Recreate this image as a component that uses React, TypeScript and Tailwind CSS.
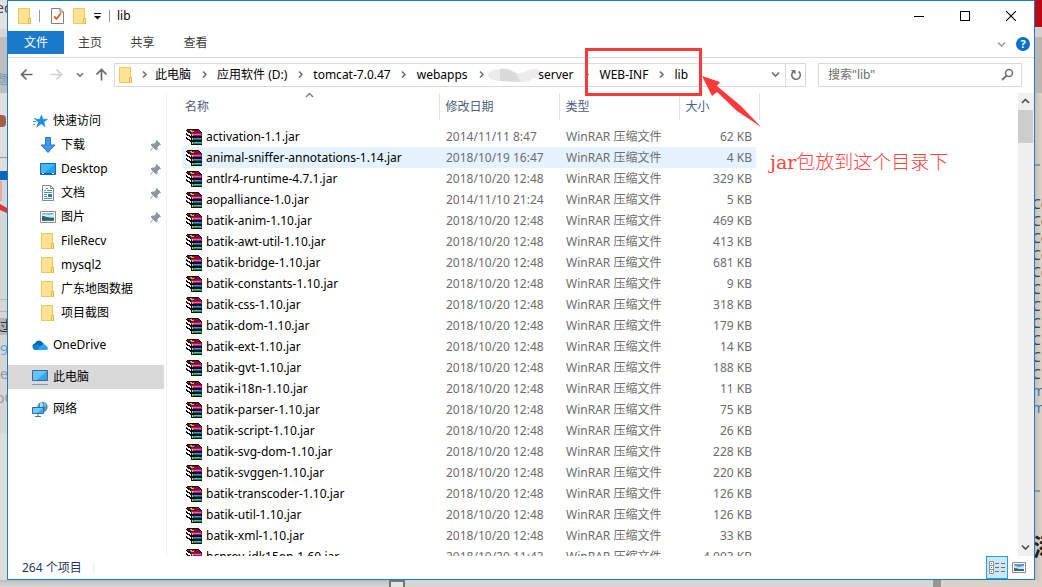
import React from "react";

type FileRow = { name: string; date: string; size: string };

const files: FileRow[] = [
  { name: "activation-1.1.jar", date: "2014/11/11 8:47", size: "62 KB" },
  { name: "animal-sniffer-annotations-1.14.jar", date: "2018/10/19 16:47", size: "4 KB" },
  { name: "antlr4-runtime-4.7.1.jar", date: "2018/10/20 12:48", size: "329 KB" },
  { name: "aopalliance-1.0.jar", date: "2014/11/10 21:24", size: "5 KB" },
  { name: "batik-anim-1.10.jar", date: "2018/10/20 12:48", size: "469 KB" },
  { name: "batik-awt-util-1.10.jar", date: "2018/10/20 12:48", size: "413 KB" },
  { name: "batik-bridge-1.10.jar", date: "2018/10/20 12:48", size: "681 KB" },
  { name: "batik-constants-1.10.jar", date: "2018/10/20 12:48", size: "9 KB" },
  { name: "batik-css-1.10.jar", date: "2018/10/20 12:48", size: "318 KB" },
  { name: "batik-dom-1.10.jar", date: "2018/10/20 12:48", size: "179 KB" },
  { name: "batik-ext-1.10.jar", date: "2018/10/20 12:48", size: "14 KB" },
  { name: "batik-gvt-1.10.jar", date: "2018/10/20 12:48", size: "188 KB" },
  { name: "batik-i18n-1.10.jar", date: "2018/10/20 12:48", size: "11 KB" },
  { name: "batik-parser-1.10.jar", date: "2018/10/20 12:48", size: "75 KB" },
  { name: "batik-script-1.10.jar", date: "2018/10/20 12:48", size: "26 KB" },
  { name: "batik-svg-dom-1.10.jar", date: "2018/10/20 12:48", size: "228 KB" },
  { name: "batik-svggen-1.10.jar", date: "2018/10/20 12:48", size: "220 KB" },
  { name: "batik-transcoder-1.10.jar", date: "2018/10/20 12:48", size: "126 KB" },
  { name: "batik-util-1.10.jar", date: "2018/10/20 12:48", size: "126 KB" },
  { name: "batik-xml-1.10.jar", date: "2018/10/20 12:48", size: "33 KB" },
  { name: "bcprov-jdk15on-1.60.jar", date: "2018/10/20 11:43", size: "4,003 KB" },
];

function FolderIcon() {
  return (
    <svg width="14" height="16" viewBox="0 0 14 16" className="shrink-0">
      <path d="M.5.5h11v9.5h1v5.5H.5z" fill="#ffe394" stroke="#ecc956" />
      <path d="M10.500 15V10.500h2v5h-2" fill="#ffe9a6" stroke="#e3b93c" />
    </svg>
  );
}

function CheckDocIcon() {
  return (
    <svg width="13" height="16" viewBox="0 0 13 16" className="shrink-0">
      <path d="M.5.5H9L12.500 4v11.500H.5z" fill="#fff" stroke="#808080" />
      <path d="M9 .5V4h3.500" fill="none" stroke="#808080" />
      <path d="M3 8.500 5.500 11 10 5" fill="none" stroke="#ea5a1c" strokeWidth="1.800" />
    </svg>
  );
}

function Chevron({ dir, className }: { dir: "right" | "down" | "up"; className?: string }) {
  const d = dir === "right" ? "M3 1.500 6 4.500 3 7.500" : dir === "down" ? "M1 2.500 4.500 6 8 2.500" : "M1 6 4.500 2.500 8 6";
  return (
    <svg width="9" height="9" viewBox="0 0 9 9" className={className}>
      <path d={d} fill="none" stroke="currentColor" strokeWidth="1.600" />
    </svg>
  );
}

function Arrow({ dir, className }: { dir: "left" | "right" | "up"; className?: string }) {
  const d =
    dir === "left"
      ? "M12.500 6.500H1.500M6.500 1.500l-5 5 5 5"
      : dir === "right"
        ? "M.5 6.500h11M6.500 1.500l5 5-5 5"
        : "M6.500 12.500V1.500M1.500 6.500l5-5 5 5";
  return (
    <svg width="13" height="13" viewBox="0 0 13 13" className={className}>
      <path d={d} fill="none" stroke="currentColor" strokeWidth="1.700" />
    </svg>
  );
}

function ArchiveIcon() {
  return (
    <svg width="16" height="16" viewBox="0 0 16 16" shapeRendering="crispEdges" className="shrink-0">
      <path d="M1 0h12v1h1v1h1v1h1v13H5v-1H4v-1H3v-1H2v-1H1v-1H0V1h1z" fill="#120a14" />
      <path d="M1 1h12v1h1v1h1v1H5V3H3V2H1z" fill="#7c1030" />
      <path d="M4 1h2v1H4zM5 2h3v1H5z" fill="#d8c020" />
      <path d="M5 4h11v3H6V6H5z" fill="#a81468" />
      <path d="M7 5h8v1H7z" fill="#e868b8" />
      <path d="M6 9h10v2H6z" fill="#0c5ca8" />
      <path d="M8 9h7v1H8z" fill="#3c98dc" />
      <path d="M6 13h10v2H6z" fill="#0a9058" />
      <path d="M8 13h7v1H8z" fill="#48cc90" />
      <path d="M6 5h1v2H6zM6 9h1v2H6zM6 13h1v2H6z" fill="#d8d040" />
      <path
        d="M0 2h1v1h1v1h2v1h1v2H4V6H2V5H1V4H0zM0 6h1v1h2v1h1v1h1v2H4v-1H2V9H1V8H0zM0 10h1v1h2v1h1v1h1v2H4v-1H2v-1H1v-1H0z"
        fill="#fff"
      />
    </svg>
  );
}

function StarIcon() {
  return (
    <svg width="16" height="16" viewBox="0 0 16 16" className="shrink-0">
      <path d="M9.500 2 11 6.200l4.500.1-3.700 2.600 1.300 4.600-4-2.700-4.500 3.400 2-5L3 6.300l4.800-.1z" fill="#1b92e6" stroke="#1b7fcb" strokeWidth=".6" />
      <path d="M1 8.500h3M1 11.500h2M2 5.500h2" stroke="#5c9cc8" />
    </svg>
  );
}

function DownloadIcon() {
  return (
    <svg width="16" height="16" viewBox="0 0 16 16" className="shrink-0">
      <path d="M5.500.5h5v7.500h4.500L8 15.500 1 8h4.500z" fill="#3f97e6" stroke="#2a78c4" />
    </svg>
  );
}

function DesktopIcon() {
  return (
    <svg width="16" height="16" viewBox="0 0 16 16" className="shrink-0">
      <path d="M.5 2.500h15v11H.5z" fill="#20a2fa" stroke="#0a6abb" />
      <path d="M1 3h14L4 12H1z" fill="#45b6ff" />
      <path d="M1 12.500h14" stroke="#075fa8" />
      <path d="M2 12.500h2M12 12.500h2" stroke="#fff" />
    </svg>
  );
}

function DocIcon() {
  return (
    <svg width="16" height="16" viewBox="0 0 16 16" className="shrink-0">
      <path d="M2.500.5h8l3 3v12h-11z" fill="#fff" stroke="#858585" />
      <path d="M10.500.5v3h3" fill="none" stroke="#858585" />
      <path d="M6 3.500h2M4 5.500h2M7 5.500h5M4 7.500h8M4 9.500h3M4 11.500h3M4 13.500h8" stroke="#3e94c5" />
      <path d="M8 9h4v3H8z" fill="#3578a4" />
    </svg>
  );
}

function PictureIcon() {
  return (
    <svg width="16" height="16" viewBox="0 0 16 16" className="shrink-0">
      <path d="M.5 2.500h15v11H.5z" fill="#fff" stroke="#8c8c8c" />
      <path d="M2 4h12v8H2z" fill="#7ab9ef" />
      <path d="M2 6l3-1 4 1 5-1v3H2z" fill="#d5e9f5" />
      <path d="M2 7c4 0 5 2 12 2v3H2z" fill="#2f6857" />
      <path d="M2 11h12v1H2z" fill="#2b7fb5" />
    </svg>
  );
}

function CloudIcon() {
  return (
    <svg width="16" height="12" viewBox="0 0 16 12" className="shrink-0">
      <path d="M3 10.500C-.5 9.500-.3 5 3 4.500 4 1 8.500.2 10.500 3.500L12 5l-6 5.500z" fill="#0864b8" />
      <path d="M3 11C.5 10.500 0 7 2.500 6 5 4.500 7 5.500 9 7l4 4z" fill="#1080d8" />
      <path d="M5 11l4.500-5c1.500-1.500 4-1 4.500 1 2.500.5 2.500 4 0 4z" fill="#28a2ec" />
    </svg>
  );
}

function ComputerIcon() {
  return (
    <svg width="16" height="16" viewBox="0 0 16 16" className="shrink-0">
      <path d="M.5 1.500h15v10H.5z" fill="#2fa5ee" stroke="#386b8d" />
      <path d="M1 2h14L5 11H1z" fill="#66c2fa" />
      <path d="M0 15.500h16" stroke="#7d9db5" />
    </svg>
  );
}

function NetworkIcon() {
  return (
    <svg width="16" height="16" viewBox="0 0 16 16" className="shrink-0">
      <circle cx="10.500" cy="6" r="5.200" fill="#4e93bd" />
      <path d="M8 2c2-1 3 0 3 2s-2 3-3 2zM12 2c2 1 2 3 1 4z" fill="#b5d9e8" />
      <path d="M.5 6.500h11v6H.5z" fill="#3aaef0" stroke="#2c6d9a" />
      <path d="M1 7h10l-6 5H1z" fill="#70ccfa" />
      <path d="M6 13v2M3 15.500h6" stroke="#50758d" />
    </svg>
  );
}

function PinIcon() {
  return (
    <svg width="11" height="11" viewBox="0 0 11 11" className="shrink-0">
      <path d="M6.500.5l4 4-1.500.5-2 2 .2 2.200-1 .8-5-5 .8-1L4.200 4.200l2-2zM3 7.500.5 10.500" fill="#8796a3" stroke="#8796a3" />
    </svg>
  );
}

const quickItems = [
  { label: "下载", icon: <DownloadIcon />, pinned: true },
  { label: "Desktop", icon: <DesktopIcon />, pinned: true },
  { label: "文档", icon: <DocIcon />, pinned: true },
  { label: "图片", icon: <PictureIcon />, pinned: true },
  { label: "FileRecv", icon: <FolderIcon />, pinned: false },
  { label: "mysql2", icon: <FolderIcon />, pinned: false },
  { label: "广东地图数据", icon: <FolderIcon />, pinned: false },
  { label: "项目截图", icon: <FolderIcon />, pinned: false },
];

const rootItems = [
  { label: "OneDrive", icon: <CloudIcon />, active: false },
  { label: "此电脑", icon: <ComputerIcon />, active: true },
  { label: "网络", icon: <NetworkIcon />, active: false },
];

function Backdrop() {
  return (
    <div aria-hidden="true" className="absolute inset-0 overflow-hidden bg-[#d6d6d6]">
      <div className="absolute left-0 top-0 h-[29px] w-[7px] bg-[#e2e2e2]" />
      <div className="absolute -left-1 top-0 text-sm leading-4 text-[#444]">ec</div>
      <div className="absolute left-0 top-[37px] h-14 w-[7px] bg-[#bebebe]" />
      <div className="absolute -left-1 top-[74px] text-xs leading-3 text-[#7290a9]">题</div>
      <div className="absolute left-0 top-[93px] h-[78px] w-[7px] bg-[#dedede]" />
      <div className="absolute left-0 top-[115px] h-3 w-[6px] rounded-r bg-[#a55e45]" />
      <div className="absolute left-0 top-[157px] h-px w-[7px] bg-[#999]" />
      <div className="absolute left-0 top-[171px] h-[9px] w-[7px] bg-[#0867bd]" />
      <div className="absolute left-0 top-[181px] h-[20px] w-[2px] bg-[#e7a5a5]" />
      <svg className="absolute left-0 top-[203px]" width="7" height="10">
        <path d="M0 1l7 4v5L0 7z" fill="#dc3535" />
      </svg>
      <div className="absolute left-0 top-[299px] h-[13px] w-[7px] border-y border-[#a9b5bd]" />
      <div className="absolute left-0 top-[318px] h-[17px] w-[7px] bg-[#b5b5b5]" />
      <div className="absolute -left-1 top-[318px] text-sm leading-4 text-[#333]">过</div>
      <div className="absolute -left-2 top-[342px] text-sm leading-4 text-[#6aa4c8]">19</div>
      <div className="absolute left-0 top-[366px] text-sm leading-4 text-[#999]">e</div>
      <div className="absolute -left-1 top-[390px] text-sm leading-4 text-[#999]">oC</div>
      <div className="absolute left-0 top-[434px] bottom-0 w-[7px] bg-[#dddddd]" />

      <div className="absolute right-0 top-0 h-full w-[7px] bg-gradient-to-r from-[#c8bfb6] to-[#ddd3ca]" />
      <div className="absolute right-0 top-0 h-[27px] w-[7px] bg-[#bb0a14]" />
      <div className="absolute right-0 top-[27px] h-[10px] w-[7px] bg-[#d4d0ce]" />
      <div className="absolute right-0 top-[37px] h-14 w-[7px] bg-[#bcb5b0]" />
      <div className="absolute right-[2px] top-[164px] h-[2px] w-[5px] bg-[#96918d]" />
      <div className="absolute right-[2px] top-[490px] h-[2px] w-[5px] bg-[#96918d]" />
      <div className="absolute left-[1032px] top-[195px] flex flex-col text-sm leading-[17px] text-[#39404a]">
        <span>Co</span>
        <span>Co</span>
        <span>Co</span>
        <span>Co</span>
        <span>Co</span>
        <span>C</span>
        <span>C</span>
        <span>C</span>
        <span>C</span>
        <span>C</span>
        <span>C</span>
        <span className="text-[#3c78a8]">m</span>
        <span className="text-[#3c78a8]">m</span>
      </div>
      <div className="absolute left-[1033px] top-[533px] text-2xl font-bold leading-7 text-[#222]">添</div>

      <div className="absolute bottom-0 left-0 h-[7px] w-[389px] bg-gradient-to-b from-[#bdbdbd] to-[#d8d8d8]" />
      <div className="absolute bottom-0 left-[389px] h-[7px] w-4 border-2 border-b-0 border-[#777] bg-[#e4e4e4]" />
      <div className="absolute bottom-0 left-[933px] h-[7px] w-2 bg-[#969696]" />
      <div className="absolute bottom-0 left-[941px] right-0 h-[7px] bg-[#dbd1c9]" />
    </div>
  );
}

function TitleBar() {
  return (
    <header className="flex h-[30px] shrink-0 items-center bg-white pl-[10px]">
      <FolderIcon />
      <span className="ml-[7px] h-3 w-px bg-[#999]" />
      <span className="ml-[11px] flex">
        <CheckDocIcon />
      </span>
      <span className="ml-[9px] flex">
        <FolderIcon />
      </span>
      <button type="button" aria-label="自定义快速访问工具栏" className="ml-[6px] p-px">
        <svg width="7" height="7" viewBox="0 0 7 7">
          <path d="M0 0h7v1H0zM0 3h7L3.500 6.500z" fill="#111" />
        </svg>
      </button>
      <span className="ml-[7px] h-3 w-px bg-[#999]" />
      <h1 className="ml-[7px] text-xs text-black">lib</h1>
      <div className="ml-auto flex h-full items-center">
        <button type="button" aria-label="最小化" className="flex h-full w-[46px] items-center justify-center">
          <span className="h-px w-[10px] bg-black" />
        </button>
        <button type="button" aria-label="最大化" className="flex h-full w-[46px] items-center justify-center">
          <span className="size-[10px] border border-black" />
        </button>
        <button type="button" aria-label="关闭" className="flex h-full w-[46px] items-center justify-center">
          <svg width="10" height="10" viewBox="0 0 10 10">
            <path d="M0 0l10 10M10 0 0 10" stroke="#000" strokeWidth="1.100" />
          </svg>
        </button>
      </div>
    </header>
  );
}

function Ribbon() {
  return (
    <nav className="flex h-[27px] shrink-0 items-start border-b border-[#dadbdc] bg-white text-xs text-[#3c3c3c]">
      <button type="button" className="h-[23px] w-14 bg-[#1979ca] text-white">文件</button>
      <button type="button" className="h-[23px] w-[52px]">主页</button>
      <button type="button" className="h-[23px] w-[53px]">共享</button>
      <button type="button" className="h-[23px] w-[53px]">查看</button>
      <div className="ml-auto flex h-[26px] items-center gap-[10px] pr-[4px]">
        <button type="button" aria-label="展开功能区" className="text-[#a0a0a0]">
          <Chevron dir="down" />
        </button>
        <button type="button" aria-label="帮助" className="flex size-[14px] items-center justify-center rounded-full bg-[#0a71c9] text-[11px] font-bold leading-3 text-white">
          ?
        </button>
      </div>
    </nav>
  );
}

function Separator() {
  return (
    <span className="flex w-[26px] shrink-0 justify-center text-[#707070]">
      <Chevron dir="right" />
    </span>
  );
}

function AddressRow() {
  return (
    <div className="flex h-[35px] shrink-0 items-center bg-white px-3 pb-[2px] text-xs">
      <button type="button" aria-label="后退" className="text-[#686868]">
        <Arrow dir="left" />
      </button>
      <button type="button" aria-label="前进" className="ml-[17px] text-[#d0d0d0]">
        <Arrow dir="right" />
      </button>
      <button type="button" aria-label="最近浏览的位置" className="ml-[13px] text-[#707070]">
        <Chevron dir="down" className="size-[8px]" />
      </button>
      <button type="button" aria-label="上移" className="ml-[11px] text-[#686868]">
        <Arrow dir="up" />
      </button>
      <div className="ml-[6px] flex h-[24px] min-w-0 flex-1 items-center border border-[#d9d9d9] pl-1 text-black">
        <FolderIcon />
        <span className="flex w-[22px] shrink-0 justify-center text-[#707070]">
          <Chevron dir="right" />
        </span>
        <a href="#pc" className="shrink-0">此电脑</a>
        <Separator />
        <a href="#d" className="shrink-0">应用软件 (D:)</a>
        <Separator />
        <a href="#tomcat" className="shrink-0">tomcat-7.0.47</a>
        <Separator />
        <a href="#webapps" className="shrink-0">webapps</a>
        <span className="flex w-[20px] shrink-0 justify-center pl-2 text-[#707070]">
          <Chevron dir="right" />
        </span>
        <a href="#server" className="flex w-[86px] shrink-0 items-center justify-end">
          <svg width="54" height="16" viewBox="0 0 54 16" className="-mr-1 shrink-0">
            <path d="M0 8c0-4 7-6 14-6 8-1 10 3 15 4 7 1 10-4 17-4 6 0 8 2 8 5 0 4-8 3-11 6-5 3-16 2-23 1C9 15 0 13 0 8z" fill="#ececec" />
            <path d="M12 2c7-2 10 2 16 4l4 9-20-1z" fill="#dadada" />
          </svg>
          server
        </a>
        <Separator />
        <a href="#webinf" className="shrink-0">WEB-INF</a>
        <Separator />
        <a href="#lib" className="shrink-0">lib</a>
        <button type="button" aria-label="以前的位置" className="ml-auto flex h-full w-5 items-center justify-center text-[#707070]">
          <Chevron dir="down" />
        </button>
        <button type="button" aria-label="刷新" className="flex h-full w-[20px] items-center justify-center border-l border-[#d9d9d9]">
          <svg width="12" height="12" viewBox="0 0 12 12">
            <path d="M8.500 2.500A4.300 4.300 0 1 1 3.200 2.800" fill="none" stroke="#707070" strokeWidth="1.600" />
            <path d="M.8 1h4.700v4.600z" fill="#707070" />
          </svg>
        </button>
      </div>
      <label className="ml-3 flex h-[24px] w-[204px] shrink-0 items-center border border-[#d9d9d9] pl-[9px] pr-[7px]">
        <span className="sr-only">搜索</span>
        <input type="search" placeholder={'搜索"lib"'} className="min-w-0 flex-1 bg-transparent text-xs outline-none placeholder:text-[#6d6d6d]" />
        <svg width="13" height="13" viewBox="0 0 13 13">
          <circle cx="8" cy="5" r="3.500" fill="none" stroke="#707070" strokeWidth="1.500" />
          <path d="M5.500 7.500 1 12" stroke="#707070" strokeWidth="1.800" />
        </svg>
      </label>
    </div>
  );
}

function Sidebar() {
  return (
    <aside className="w-[159px] shrink-0 overflow-hidden border-r border-[#f0f0f0] pt-4 text-xs text-black">
      <a href="#quick" className="flex h-6 items-center gap-[5px] pl-6">
        <StarIcon />
        快速访问
      </a>
      <ul>
        {quickItems.map((item) => (
          <li key={item.label}>
            <a href="#folder" className="flex h-6 items-center gap-[5px] pl-8 pr-[5px]">
              <span className="flex w-4 shrink-0 justify-center">{item.icon}</span>
              <span className="flex-1">{item.label}</span>
              {item.pinned && <PinIcon />}
            </a>
          </li>
        ))}
      </ul>
      <ul className="flex flex-col gap-2 pt-2">
        {rootItems.map((item) => (
          <li key={item.label}>
            <a
              href="#root"
              className={
                item.active
                  ? "mr-[2px] flex h-6 items-center gap-[5px] bg-[#d9d9d9] pl-6"
                  : "mr-[2px] flex h-6 items-center gap-[5px] pl-6"
              }
            >
              {item.icon}
              {item.label}
            </a>
          </li>
        ))}
      </ul>
    </aside>
  );
}

function FileTable() {
  return (
    <section className="min-w-0 flex-1 overflow-hidden pl-[15px]">
      <table className="w-[577px] table-fixed border-collapse text-left text-xs">
        <colgroup>
          <col className="w-[257px]" />
          <col className="w-[120px]" />
          <col className="w-[120px]" />
          <col className="w-[77px]" />
          <col className="w-[3px]" />
        </colgroup>
        <thead className="text-[#4c607a]">
          <tr className="h-[27px]">
            <th className="relative p-0 pl-[3px] font-normal">
              名称
              <Chevron dir="up" className="absolute left-[123px] top-[-2px] text-[#808080]" />
            </th>
            <th className="border-l border-[#e5e5e5] p-0 pl-[6px] font-normal">修改日期</th>
            <th className="border-l border-[#e5e5e5] p-0 pl-[6px] font-normal">类型</th>
            <th colSpan={2} className="border-x border-[#e5e5e5] p-0 pl-[6px] font-normal">大小</th>
          </tr>
        </thead>
        <tbody className="text-[#6d6d6d]">
          <tr className="h-[6px]">
            <td colSpan={5} className="p-0" />
          </tr>
          {files.map((file, index) => {
            const tint = index === 1 ? "bg-[#e5f3ff]" : "";
            return (
              <tr key={file.name} className="h-[21px]">
                <td className={`p-0 pl-1 text-black ${tint}`}>
                  <span className="flex items-center gap-1 whitespace-nowrap">
                    <ArchiveIcon />
                    {file.name}
                  </span>
                </td>
                <td className={`whitespace-nowrap p-0 pl-[7px] ${tint}`}>{file.date}</td>
                <td className={`whitespace-nowrap p-0 pl-[7px] ${tint}`}>WinRAR 压缩文件</td>
                <td className={`whitespace-nowrap p-0 pr-1 text-right ${tint}`}>{file.size}</td>
                <td className="p-0" />
              </tr>
            );
          })}
        </tbody>
      </table>
    </section>
  );
}

function ScrollBar() {
  return (
    <div className="flex w-4 shrink-0 flex-col bg-[#f0f0f0] text-[#505050]">
      <button type="button" aria-label="向上滚动" className="flex h-[17px] items-center justify-center pr-px">
        <Chevron dir="up" />
      </button>
      <div className="mr-px h-[33px] bg-[#cdcdcd]" />
      <button type="button" aria-label="向下滚动" className="mt-auto flex h-[17px] items-center justify-center pr-px">
        <Chevron dir="down" />
      </button>
    </div>
  );
}

function StatusBar() {
  return (
    <footer className="flex h-[23px] shrink-0 items-center bg-white pl-[14px] pr-[8px] text-xs text-[#1e395b]">
      <span>264 个项目</span>
      <span className="ml-[11px] h-3 w-px bg-[#eeeeee]" />
      <button type="button" aria-label="详细信息" className="ml-auto flex h-[23px] w-[22px] items-center justify-center border border-[#26a0da] bg-[#cbe8f6]">
        <svg width="16" height="13" viewBox="0 0 16 13">
          <path d="M.5.5h4v12h-4zM.5 4.500h4M.5 8.500h4" fill="#fff" stroke="#909090" />
          <path d="M6 2.500h4M12 2.500h4M6 6.500h4M12 6.500h4M6 10.500h4M12 10.500h4" stroke="#707070" />
          <path d="M2 2h1v1H2z" fill="#666" />
          <path d="M2 6h1v1H2z" fill="#2f77d0" />
          <path d="M2 10h1v1H2z" fill="#d03030" />
        </svg>
      </button>
      <button type="button" aria-label="大图标" className="ml-[4px]">
        <svg width="14" height="11" viewBox="0 0 14 11">
          <path d="M.5.5h13v10H.5z" fill="#fff" stroke="#909090" />
          <path d="M2 2h10v7H2z" fill="#5793d5" />
          <path d="M2 3l4 2 6-1v3H2z" fill="#cbe3f3" />
          <path d="M2 6c4 0 6 2 10 1v2H2z" fill="#326c63" />
        </svg>
      </button>
    </footer>
  );
}

function Annotations() {
  return (
    <>
      <div className="pointer-events-none absolute left-[585px] top-[48px] h-12 w-[117px] border-[3px] border-[#fd3939]" />
      <svg className="pointer-events-none absolute left-[702px] top-[75px]" width="60" height="54" viewBox="0 0 60 54">
        <path d="M0 1 18 7l-3 4 24 20 20 21-24-16-20-19-5 4z" fill="#fd3939" />
      </svg>
      <p className="pointer-events-none absolute left-[770px] top-[150px] whitespace-nowrap font-['DejaVu_Serif','Noto_Sans_CJK_SC',serif] text-[19px] font-light leading-6 text-[#ff4343]">
        jar包放到这个目录下
      </p>
    </>
  );
}

export default function App() {
  return (
    <div className="relative h-screen overflow-hidden px-[7px] pb-[7px] font-['Noto_Sans','Noto_Sans_CJK_SC',sans-serif]">
      <Backdrop />
      <main className="relative flex h-full flex-col border border-[#1a7ad0] bg-white">
        <TitleBar />
        <Ribbon />
        <AddressRow />
        <div className="flex min-h-0 flex-1">
          <Sidebar />
          <FileTable />
          <ScrollBar />
        </div>
        <StatusBar />
      </main>
      <Annotations />
    </div>
  );
}
